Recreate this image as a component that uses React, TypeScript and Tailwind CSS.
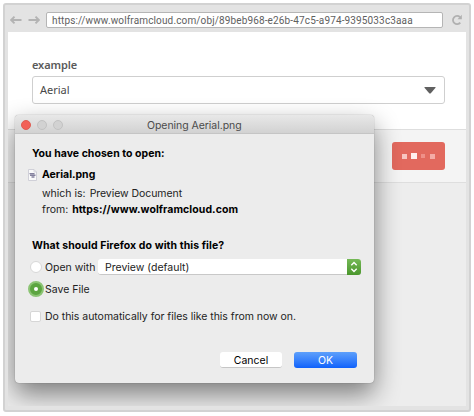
import type { ReactNode } from "react";

const FILE_NAME = "Aerial.png";
const SOURCE_URL = "https://www.wolframcloud.com";
const PAGE_URL = `${SOURCE_URL}/obj/89beb968-e26b-47c5-a974-9395033c3aaa`;

export default function App() {
  return (
    <div className="relative h-[416px] w-[474px] overflow-hidden bg-white px-[3px] pt-[3px]">
      <BrowserWindow />
      <DownloadDialog />
    </div>
  );
}

function BrowserWindow() {
  return (
    <div className="flex h-[409px] w-[468px] flex-col rounded-[3px] border-2 border-[#d2d2d2] bg-[#e3e3e3] px-[3px] pb-[4px]">
      <div className="flex h-[27px] shrink-0 items-center pt-[3px]">
        <NavArrow />
        <NavArrow flip />
        <div className="ml-[6px] flex h-[16px] w-[397px] shrink-0 items-center rounded-[2px] border border-[#b5b5b5] bg-white pl-[5px] font-[Roboto,sans-serif] text-[10px] tracking-[0.14px] whitespace-nowrap text-[#606060]">
          {PAGE_URL}
        </div>
        <ReloadIcon />
      </div>

      <div className="flex min-h-0 flex-1 flex-col bg-[#ededed]">
        <div className="h-[97px] shrink-0 bg-white pt-[24px] pl-[24px] font-['Noto_Sans',sans-serif] text-[#5a5a5a]">
          <div className="h-[20px] text-[11px] leading-[17px] font-semibold tracking-[-0.1px]">
            example
          </div>
          <div className="flex h-[28px] w-[413px] items-center justify-between rounded-[3px] border border-[#cfcfcf] pt-[1px] pr-[8px] pl-[7px] text-[11px] text-[#484848]">
            <span>Aerial</span>
            <svg width="12" height="7" viewBox="0 0 12 7" fill="#606060">
              <path d="M1 0h10q1 0 .5.8L6.8 6.2q-.8.8-1.6 0L.5.8Q0 0 1 0z" />
            </svg>
          </div>
        </div>

        {/* Submit strip with the busy button */}
        <div className="flex h-[54px] shrink-0 items-center justify-end border-y border-[#dedede] bg-[#f4f4f4] pr-[21px]">
          <div className="flex h-[28px] w-[53px] items-center justify-center gap-[4px] rounded-[3px] bg-[#e2695e]">
            <span className="size-[5px] bg-[#f7c5c0]" />
            <span className="size-[6px] bg-[#fff0ee]" />
            <span className="size-[4px] bg-[#ef9088]" />
            <span className="ml-[1px] size-[5px] bg-[#f4aca6]" />
          </div>
        </div>
      </div>
    </div>
  );
}

function DownloadDialog() {
  return (
    <div className="absolute top-[5px] right-[9px] bottom-[10px] left-[8px] overflow-hidden">
      <div
        role="dialog"
        className="absolute top-[110px] left-[7px] h-[268px] w-[359px] rounded-[4px] bg-[#ececec] font-[Inter,sans-serif] text-[10.5px] whitespace-nowrap text-[#222] shadow-[0_11px_26px_rgba(0,0,0,0.48),0_0_1px_rgba(0,0,0,0.5)]"
      >
        <div className="flex h-[19px] items-center rounded-t-[4px] border-b border-[#c5c5c5] bg-linear-to-b from-[#e8e8e8] to-[#d2d2d2] pt-[2px] pl-[6px]">
          <span className="size-[10px] rounded-full border border-[#df5d52] bg-[#f26157]" />
          <span className="ml-[6px] size-[10px] rounded-full border border-[#c2c2c2] bg-[#d2d2d2]" />
          <span className="ml-[6px] size-[10px] rounded-full border border-[#c2c2c2] bg-[#d2d2d2]" />
          <span className="ml-[84px] pt-[2px] leading-[18px] tracking-[-0.05px] text-[#4b4b4b]">
            Opening {FILE_NAME}
          </span>
        </div>

        <div className="flex flex-col pl-[15px]">
          <Row className="mt-[11px] ml-[2px] font-bold tracking-[0.04px] text-black">
            You have chosen to open:
          </Row>
          <Row className="mt-[3px] font-bold text-black">
            <FileIcon />
            <span className="ml-[4px]">{FILE_NAME}</span>
          </Row>
          <Row className="mt-[1px] ml-[12px]">
            <span>which is:</span>
            <span className="ml-[4px] tracking-[-0.06px]">Preview Document</span>
          </Row>
          <Row className="-mt-[2px] ml-[12px]">
            <span>from:</span>
            <span className="ml-[4px] font-bold tracking-[0.07px] text-black">
              {SOURCE_URL}
            </span>
          </Row>
          <Row className="mt-[18px] ml-[2px] font-bold tracking-[0.08px] text-black">
            What should Firefox do with this file?
          </Row>
          <Row className="mt-[3px]">
            <span className="size-[12px] rounded-full border border-[#d8d8d8] bg-white" />
            <span className="ml-[3px] w-[53px] pt-[2px]">Open with</span>
            <div className="flex h-[16px] w-[263px] items-center rounded-[3px] border-b border-[#c8c8c8] bg-white pl-[7px]">
              <span className="pt-[2px]">Preview (default)</span>
              <Stepper />
            </div>
          </Row>
          <Row className="mt-[4px] -ml-[2px]">
            <span className="flex size-[16px] items-center justify-center rounded-full border-2 border-[#8cc474] bg-[#5ca540]">
              <span className="size-[4px] rounded-full bg-white" />
            </span>
            <span className="ml-[1px] pt-[2px]">Save File</span>
          </Row>
          <Row className="mt-[9px]">
            <span className="size-[11px] rounded-[2px] border border-[#d6d6d6] bg-white" />
            <span className="ml-[4px] pt-[2px] tracking-[-0.03px]">
              Do this automatically for files like this from now on.
            </span>
          </Row>
        </div>

        <div className="mt-[27px] flex justify-end gap-[12px] pr-[17px] text-black">
          <button className="h-[16px] w-[62px] rounded-[3px] border-b border-[#c6c6c6] bg-white pt-[1px] leading-[15px]">
            Cancel
          </button>
          <button className="h-[16px] w-[63px] rounded-[3px] bg-linear-to-b from-[#5d9ffb] to-[#0d61fb] pt-[1px] leading-[15px] text-white">
            OK
          </button>
        </div>
      </div>
    </div>
  );
}

function Row({ className, children }: { className: string; children: ReactNode }) {
  return (
    <div className={`flex h-[18px] shrink-0 items-center leading-[18px] ${className}`}>
      {children}
    </div>
  );
}

function NavArrow({ flip = false }: { flip?: boolean }) {
  return (
    <svg
      className={flip ? "ml-[6px] -scale-x-100" : "ml-[2px]"}
      width="12"
      height="8"
      viewBox="0 0 12 8"
      fill="none"
      stroke="#b3b3b3"
      strokeWidth="1.9"
    >
      <path d="M4.5.7 1.2 4l3.3 3.3M1.2 4H11.5" />
    </svg>
  );
}

function ReloadIcon() {
  return (
    <svg
      className="ml-[8px]"
      width="12"
      height="12"
      viewBox="0 0 12 12"
      fill="none"
      stroke="#b0b0b0"
      strokeWidth="1.8"
    >
      <path d="M9.3 8.6A4.1 4.1 0 1 1 9 3.2" />
      <path d="M10.8.8v4.4H6.5z" fill="#b0b0b0" stroke="none" />
    </svg>
  );
}

function FileIcon() {
  return (
    <svg className="-ml-[3px]" width="11" height="12" viewBox="0 0 11 12">
      <path d="M1.5.5H7L9.5 3v8.5h-8z" fill="#fafafa" stroke="#d0d0d8" />
      <path d="M7 .5V3h2.5" fill="none" stroke="#c8c8d0" strokeWidth=".6" />
      <path d="M2.5 4.6h5M3 6.3h5.5M4.5 8h3" stroke="#85829f" strokeWidth="1.4" />
    </svg>
  );
}

function Stepper() {
  return (
    <span className="ml-auto flex h-[16px] w-[14px] items-center justify-center rounded-r-[3px] bg-linear-to-b from-[#75b957] to-[#4a962b]">
      <svg
        width="8"
        height="12"
        viewBox="0 0 8 12"
        fill="none"
        stroke="white"
        strokeWidth="1.4"
      >
        <path d="M1.3 4.3 4 1.6l2.7 2.7M1.3 7.7 4 10.4l2.7-2.7" />
      </svg>
    </span>
  );
}
